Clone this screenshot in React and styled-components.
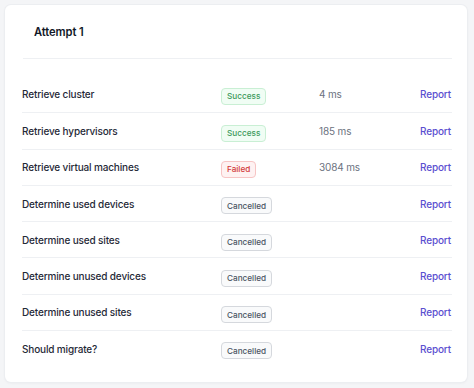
import React from 'react';
import styled, { createGlobalStyle } from 'styled-components';

const GlobalStyle = createGlobalStyle`
  html, body {
    margin: 0;
    padding: 0;
    background: #f4f5f7;
    font-family: Inter, "Noto Sans", sans-serif;
    -webkit-font-smoothing: antialiased;
  }
`;

const Page = styled.div`
  padding: 5px 7px 6px 5px;
`;

const Card = styled.div`
  background: #fff;
  border-radius: 6px;
  box-shadow: 0 0 0 1px #eceef1, 0 1px 3px rgba(0, 0, 0, 0.06);
  padding: 0 15px 16px 17px;
  height: 377px;
  box-sizing: border-box;
`;

const Header = styled.div`
  margin-left: 1px;
  padding: 19px 11px 17px;
  border-bottom: 1px solid #eef0f3;
  font-size: 11.2px;
  font-weight: 600;
  letter-spacing: -0.1px;
  color: #111827;
  line-height: 17px;
`;

const Table = styled.div`
  margin-top: 17px;
`;

const Row = styled.div`
  display: grid;
  grid-template-columns: 199px 98px 1fr auto;
  align-items: center;
  height: 36.3px;
  border-top: ${p => (p.$first ? 'none' : '1px solid #eef0f3')};
  box-sizing: border-box;
  letter-spacing: -0.15px;
`;

const Name = styled.div`
  font-size: 10px;
  font-weight: 500;
  color: #1f2937;
`;

const tones = {
  success: { bg: '#f0fdf4', border: '#c9efd4', color: '#3c9a5b' },
  failed: { bg: '#fef2f2', border: '#f7c4c4', color: '#d23a3a' },
  cancelled: { bg: '#f9fafb', border: '#d5d8dd', color: '#4b5563' },
};

const Badge = styled.span`
  justify-self: start;
  display: inline-flex;
  align-items: center;
  height: 15px;
  padding: 0 5px;
  border-radius: 4px;
  font-size: 8.2px;
  font-weight: 500;
  letter-spacing: 0;
  background: ${p => tones[p.$tone].bg};
  border: 1px solid ${p => tones[p.$tone].border};
  color: ${p => tones[p.$tone].color};
`;

const Time = styled.div`
  font-size: 10px;
  color: #6b7280;
`;

const Report = styled.a`
  font-size: 10px;
  font-weight: 500;
  color: #5b4fd0;
  text-decoration: none;
  padding-right: 1px;
`;

const steps = [
  { name: 'Retrieve cluster', status: 'success', time: '4 ms' },
  { name: 'Retrieve hypervisors', status: 'success', time: '185 ms' },
  { name: 'Retrieve virtual machines', status: 'failed', time: '3084 ms' },
  { name: 'Determine used devices', status: 'cancelled' },
  { name: 'Determine used sites', status: 'cancelled' },
  { name: 'Determine unused devices', status: 'cancelled' },
  { name: 'Determine unused sites', status: 'cancelled' },
  { name: 'Should migrate?', status: 'cancelled' },
];

const labels = { success: 'Success', failed: 'Failed', cancelled: 'Cancelled' };

export default function App() {
  return (
    <Page>
      <GlobalStyle />
      <Card>
        <Header>Attempt 1</Header>
        <Table>
          {steps.map((s, i) => (
            <Row key={s.name} $first={i === 0}>
              <Name>{s.name}</Name>
              <div>
                <Badge $tone={s.status}>{labels[s.status]}</Badge>
              </div>
              <Time>{s.time || ''}</Time>
              <Report href="#">Report</Report>
            </Row>
          ))}
        </Table>
      </Card>
    </Page>
  );
}
